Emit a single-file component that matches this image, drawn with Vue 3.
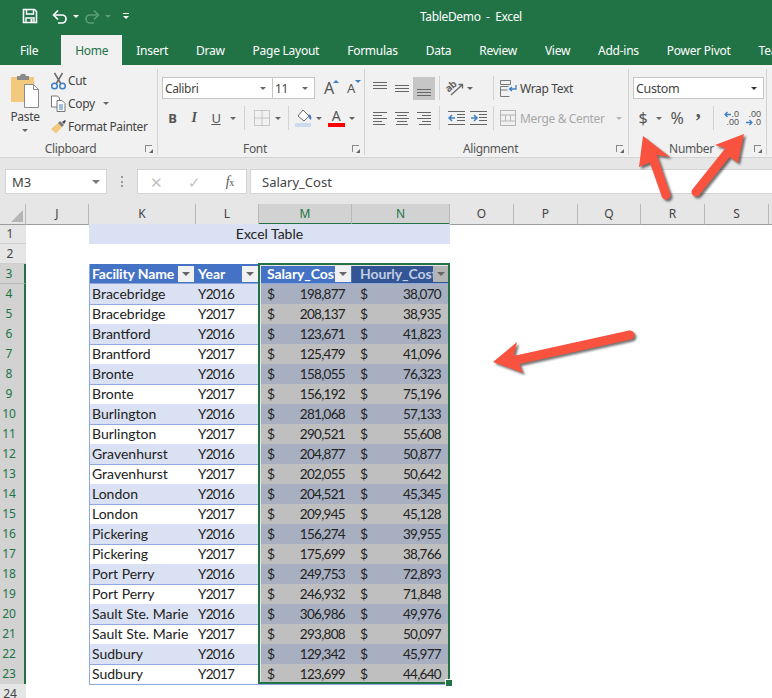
<template>
  <div class="excel">
    <header class="titlebar">
      <div class="qat">
        <svg class="qat-save" width="16" height="16" viewBox="0 0 16 16">
          <path d="M1.500 1.500h11l2 2v11h-13z" fill="none" stroke="#fff" stroke-width="1.600" />
          <path d="M4.500 2v4h7V2" fill="none" stroke="#fff" stroke-width="1.400" />
          <path d="M4 15v-5h8v5" fill="none" stroke="#fff" stroke-width="1.400" />
          <rect x="8.500" y="11" width="2" height="3" fill="#fff" />
        </svg>
        <svg class="qat-undo" width="16" height="15" viewBox="0 0 16 15">
          <path d="M2 6h8a4 4 0 0 1 0 8H6" fill="none" stroke="#fff" stroke-width="1.700" />
          <path d="M6 1.500 1.600 6 6 10.500" fill="none" stroke="#fff" stroke-width="1.700" />
        </svg>
        <span class="qat-caret"></span>
        <svg class="qat-redo" width="16" height="15" viewBox="0 0 16 15">
          <path d="M14 6H6a4 4 0 0 0 0 8h4" fill="none" stroke="#5d9c7b" stroke-width="1.600" />
          <path d="M10 1.500 14.400 6 10 10.500" fill="none" stroke="#5d9c7b" stroke-width="1.600" />
        </svg>
        <span class="qat-caret dim"></span>
        <span class="qat-more"></span>
      </div>
      <div class="doc-title">TableDemo&nbsp; -&nbsp; Excel</div>
    </header>

    <nav class="tabs">
      <div v-for="tab in tabs" :key="tab" class="tab" :class="{ active: tab === 'Home' }">{{ tab }}</div>
    </nav>

    <section class="ribbon">
      <div class="group g-clipboard">
        <div class="group-body clip-body">
          <div class="paste">
            <svg width="30" height="36" viewBox="0 0 30 36">
              <path d="M1 4h23v25H1z" fill="#f2c97d" />
              <path d="M7 3h3l1-2h4l1 2h3v4H7z" fill="#8a8a8a" />
              <path d="M14.500 11.500h9l5 5v18h-14z" fill="#fff" stroke="#8a8a8a" />
              <path d="M23.500 11.500v5h5" fill="none" stroke="#8a8a8a" />
            </svg>
            <span class="paste-label">Paste</span>
            <span class="caret"></span>
          </div>
          <div class="clip-list">
            <div class="clip-row">
              <svg width="16" height="18" viewBox="0 0 16 18">
                <path d="M4 1l6.500 11M12 1 5.500 12" stroke="#6a6a6a" stroke-width="1.500" fill="none" />
                <circle cx="4" cy="14" r="2.800" fill="none" stroke="#3f7fc4" stroke-width="1.500" />
                <circle cx="12" cy="14" r="2.800" fill="none" stroke="#3f7fc4" stroke-width="1.500" />
              </svg>
              <span>Cut</span>
            </div>
            <div class="clip-row">
              <svg width="16" height="17" viewBox="0 0 16 17">
                <path d="M1 1h6l2 2v9H1z" fill="#fff" stroke="#777" />
                <path d="M6.500 5.500h5l3 3v8h-8z" fill="#fff" stroke="#777" />
                <path d="M8.500 10h4M8.500 12h4M8.500 14h4" stroke="#3f7fc4" />
              </svg>
              <span>Copy</span>
              <span class="caret copy-caret"></span>
            </div>
            <div class="clip-row">
              <svg width="17" height="15" viewBox="0 0 17 15">
                <path d="M1 10l7-6 4 4-6 6.500z" fill="#f2c97d" />
                <path d="M8 4l4 4 2-2-4-4z" fill="#777" />
                <path d="M12 3l3-2 1 1-2 3z" fill="#444" />
              </svg>
              <span>Format Painter</span>
            </div>
          </div>
        </div>
        <div class="group-foot"><span class="group-label">Clipboard</span><span class="launcher"></span></div>
      </div>

      <div class="group g-font">
        <div class="group-body">
          <div class="tool-row">
            <div class="combo font-name">Calibri<span class="caret"></span></div>
            <div class="combo font-size">11<span class="caret"></span></div>
            <div class="tool w22 grow-a">A<i class="tick up"></i></div>
            <div class="tool w22 shrink-a">A<i class="tick down"></i></div>
          </div>
          <div class="tool-row">
            <div class="tool w21 fmt"><b>B</b></div>
            <div class="tool w22 fmt"><i class="serif-i">I</i></div>
            <div class="tool w22 fmt"><u>U</u></div>
            <div class="tool w12"><span class="caret"></span></div>
            <span class="sep"></span>
            <div class="tool w22">
              <svg width="18" height="18" viewBox="0 0 18 18">
                <path d="M1.500 1.500h15v15h-15zM9 1.500v15M1.500 9h15" fill="none" stroke="#a0a0a0" stroke-dasharray="1 1" />
              </svg>
            </div>
            <div class="tool w10"><span class="caret"></span></div>
            <span class="sep"></span>
            <div class="tool w18">
              <svg width="18" height="20" viewBox="0 0 18 20">
                <path d="M3 8l5-6 6 6-5 5z" fill="#fff" stroke="#666" />
                <path d="M14 6c2 1 3 3 2 6-2-1-3-3-2-6z" fill="#3f7fc4" />
                <rect x="0" y="15" width="16" height="4" fill="#cdd9ee" />
              </svg>
            </div>
            <div class="tool w12"><span class="caret"></span></div>
            <div class="tool w18 font-color"><span class="letter">A</span><span class="red-bar"></span></div>
            <div class="tool w14"><span class="caret"></span></div>
          </div>
        </div>
        <div class="group-foot"><span class="group-label">Font</span><span class="launcher"></span></div>
      </div>

      <div class="group g-align">
        <div class="group-body">
          <div class="tool-row">
            <div v-for="icon in valignIcons" :key="icon.id" class="tool w22" :class="{ pressed: icon.pressed }">
              <svg width="16" height="20" viewBox="0 0 16 20">
                <path :d="icon.d" stroke="#666" stroke-width="1.200" fill="none" />
              </svg>
            </div>
            <span class="sep"></span>
            <div class="tool w20">
              <svg width="20" height="20" viewBox="0 0 20 20">
                <text x="1" y="12" transform="rotate(-40 6 10)" font-size="10" font-weight="700" fill="#666">ab</text>
                <path d="M6 17 17 7M13.500 6.500H17.500V10.500" fill="none" stroke="#666" stroke-width="1.300" />
              </svg>
            </div>
            <div class="tool w10"><span class="caret"></span></div>
            <span class="sep wide"></span>
            <div class="wide-tool">
              <svg width="17" height="18" viewBox="0 0 17 18">
                <path d="M.5 1.500h10v4H.5zM.5 7.500h8M.5 11h7M.5 7.500v10h9" fill="none" stroke="#777" />
                <path d="M16 6v4h-6M12 8l-2.500 2 2.500 2" fill="none" stroke="#3f7fc4" stroke-width="1.300" />
              </svg>
              <span>Wrap Text</span>
            </div>
          </div>
          <div class="tool-row">
            <div v-for="icon in halignIcons" :key="icon.id" class="tool w22">
              <svg width="16" height="16" viewBox="0 0 16 16">
                <path :d="icon.d" stroke="#666" stroke-width="1.200" fill="none" />
              </svg>
            </div>
            <span class="sep"></span>
            <div class="tool w22">
              <svg width="17" height="14" viewBox="0 0 17 14">
                <path d="M1 7h6M4 4 1 7l3 3" stroke="#3f7fc4" stroke-width="1.500" fill="none" />
                <path d="M0 .5h17M9 3.500h8M9 6.500h8M9 9.500h8M0 13.500h17" stroke="#666" />
              </svg>
            </div>
            <div class="tool w22">
              <svg width="17" height="14" viewBox="0 0 17 14">
                <path d="M1 7h6M4 4l3 3-3 3" stroke="#3f7fc4" stroke-width="1.500" fill="none" />
                <path d="M0 .5h17M9 3.500h8M9 6.500h8M9 9.500h8M0 13.500h17" stroke="#666" />
              </svg>
            </div>
            <span class="sep wide-b"></span>
            <div class="wide-tool disabled">
              <svg width="17" height="16" viewBox="0 0 17 16">
                <path d="M.5.500h15v15H.500zM.5 5h15M.5 11h15M5.500 5v6M10.500 5v6" fill="none" stroke="#b5b5b5" />
              </svg>
              <span>Merge &amp; Center</span>
              <span class="caret merge-caret"></span>
            </div>
          </div>
        </div>
        <div class="group-foot"><span class="group-label">Alignment</span><span class="launcher"></span></div>
      </div>

      <div class="group g-number">
        <div class="group-body">
          <div class="tool-row">
            <div class="combo number-format">Custom<span class="caret dark"></span></div>
          </div>
          <div class="tool-row">
            <div class="tool w20 money">$</div>
            <div class="tool w12"><span class="caret"></span></div>
            <div class="tool w20 money pct">%</div>
            <div class="tool w20 comma">,</div>
            <span class="sep"></span>
            <div class="tool w20 decimals">
              <span class="dec-line">
                <svg width="7" height="7" viewBox="0 0 7 7"><path d="M7 3.500H1M3.500 1 1 3.500 3.500 6" fill="none" stroke="#3f7fc4" stroke-width="1.300" /></svg>
                <span>.0</span>
              </span>
              <span class="dec-line"><span>.00</span></span>
            </div>
            <div class="tool w20 decimals">
              <span class="dec-line"><span>.00</span></span>
              <span class="dec-line">
                <svg width="7" height="7" viewBox="0 0 7 7"><path d="M0 3.500h6M3.500 1 6 3.500 3.500 6" fill="none" stroke="#3f7fc4" stroke-width="1.300" /></svg>
                <span>.0</span>
              </span>
            </div>
          </div>
        </div>
        <div class="group-foot"><span class="group-label">Number</span><span class="launcher"></span></div>
      </div>
    </section>

    <div class="formula-bar">
      <div class="name-box">M3<span class="caret"></span></div>
      <span class="grip"></span>
      <div class="fx-box">
        <span class="fx-x">✕</span>
        <span class="fx-check">✓</span>
        <span class="fx-f"><i>f</i><small>x</small></span>
      </div>
      <div class="formula-input">Salary_Cost</div>
    </div>

    <div class="sheet">
      <div class="row head-row">
        <div class="corner"><span class="corner-tri"></span></div>
        <div
          v-for="col in columns"
          :key="col"
          class="col-head"
          :class="{ selected: col === 'M' || col === 'N' }"
        >
          {{ col }}
        </div>
      </div>

      <div class="row">
        <div class="row-head">1</div>
        <div></div>
        <div class="banner">Excel Table</div>
      </div>
      <div class="row">
        <div class="row-head">2</div>
      </div>
      <div class="row">
        <div class="row-head selected">3</div>
        <div></div>
        <div class="th th-k"><span class="th-text">Facility Name</span><span class="filter"></span></div>
        <div class="th th-l"><span class="th-text">Year</span><span class="filter"></span></div>
        <div class="th th-m"><span class="th-text">Salary_Cost</span><span class="filter"></span></div>
        <div class="th th-n"><span class="th-text">Hourly_Cost</span><span class="filter active"></span></div>
      </div>
      <div v-for="(item, i) in rows" :key="i" class="row data-row" :class="{ band: i % 2 === 0 }">
        <div class="row-head selected">{{ i + 4 }}</div>
        <div></div>
        <div class="td td-k">{{ item[0] }}</div>
        <div class="td td-l num">{{ item[1] }}</div>
        <div class="td money-cell td-m"><span>$</span><span class="num">{{ item[2] }}</span></div>
        <div class="td money-cell td-n"><span>$</span><span class="num">{{ item[3] }}</span></div>
      </div>
      <div class="row">
        <div class="row-head">24</div>
      </div>

      <div class="selection"><span class="handle"></span></div>
    </div>

    <svg class="arrows" width="772" height="698" viewBox="0 0 772 698">
      <g v-for="arrow in arrows" :key="arrow.id" class="arrow">
        <path :d="arrow.shaft" fill="none" stroke="#f9523f" stroke-width="9" stroke-linecap="round" />
        <path :d="arrow.head" fill="#f9523f" />
      </g>
    </svg>
  </div>
</template>

<script setup>
const tabs = ['File', 'Home', 'Insert', 'Draw', 'Page Layout', 'Formulas', 'Data', 'Review', 'View', 'Add-ins', 'Power Pivot', 'Team']

const columns = ['J', 'K', 'L', 'M', 'N', 'O', 'P', 'Q', 'R', 'S', 'T']

const valignIcons = [
  { id: 'top', d: 'M1 4.500h14M1 7.500h14M1 10.500h14' },
  { id: 'middle', d: 'M1 7.500h14M1 10.500h14M1 13.500h14' },
  { id: 'bottom', d: 'M1 11.500h14M1 14.500h14M1 17.500h14', pressed: true },
]

const halignIcons = [
  { id: 'left', d: 'M1 2.500h14M1 5.500h9M1 8.500h14M1 11.500h9M1 14.500h12' },
  { id: 'center', d: 'M1 2.500h14M3 5.500h10M1 8.500h14M3 11.500h10M2 14.500h12' },
  { id: 'right', d: 'M1 2.500h14M6 5.500h9M1 8.500h14M6 11.500h9M3 14.500h12' },
]

const rows = [
  ['Bracebridge', 'Y2016', '198,877', '38,070'],
  ['Bracebridge', 'Y2017', '208,137', '38,935'],
  ['Brantford', 'Y2016', '123,671', '41,823'],
  ['Brantford', 'Y2017', '125,479', '41,096'],
  ['Bronte', 'Y2016', '158,055', '76,323'],
  ['Bronte', 'Y2017', '156,192', '75,196'],
  ['Burlington', 'Y2016', '281,068', '57,133'],
  ['Burlington', 'Y2017', '290,521', '55,608'],
  ['Gravenhurst', 'Y2016', '204,877', '50,877'],
  ['Gravenhurst', 'Y2017', '202,055', '50,642'],
  ['London', 'Y2016', '204,521', '45,345'],
  ['London', 'Y2017', '209,945', '45,128'],
  ['Pickering', 'Y2016', '156,274', '39,955'],
  ['Pickering', 'Y2017', '175,699', '38,766'],
  ['Port Perry', 'Y2016', '249,753', '72,893'],
  ['Port Perry', 'Y2017', '246,932', '71,848'],
  ['Sault Ste. Marie', 'Y2016', '306,986', '49,976'],
  ['Sault Ste. Marie', 'Y2017', '293,808', '50,097'],
  ['Sudbury', 'Y2016', '129,342', '45,977'],
  ['Sudbury', 'Y2017', '123,699', '44,640'],
]

const arrows = [
  { id: 'dollar', shaft: 'M666 195 652 155', head: 'M643 136 670 157 656 155 657 160 639 167Z' },
  { id: 'decimal', shaft: 'M696 192 728 152', head: 'M744 134 715 145 727 149 724 153 738 163Z' },
  { id: 'table', shaft: 'M630 335 512 361', head: 'M493 362 517 342 514 355 517 358 523 373Z' },
]
</script>

<style scoped>
.excel {
  position: relative;
  width: 772px;
  height: 698px;
  overflow: hidden;
  background: #fff;
  font-family: "Noto Sans", "Open Sans", sans-serif;
  font-size: 12px;
  letter-spacing: -0.35px;
  color: #444;
}

.titlebar {
  display: flex;
  align-items: center;
  height: 35px;
  padding-bottom: 3px;
  box-sizing: border-box;
  background: #217346;
  color: #fff;
}

.qat {
  display: flex;
  align-items: center;
  width: 386px;
  padding-left: 22px;
  box-sizing: border-box;
}

.qat-undo {
  margin-left: 14px;
}

.qat-redo {
  margin-left: 5px;
}

.qat-caret {
  width: 0;
  height: 0;
  margin-left: 5px;
  border: 3px solid transparent;
  border-top-color: #fff;
  border-bottom: 0;
}

.qat-caret.dim {
  border-top-color: #5d9c7b;
}

.qat-more {
  width: 6px;
  height: 5px;
  margin-left: 12px;
  border-top: 1px solid #fff;
  position: relative;
}

.qat-more::after {
  content: "";
  position: absolute;
  left: 0;
  top: 2px;
  border: 3px solid transparent;
  border-top-color: #fff;
  border-bottom: 0;
}

.doc-title {
  margin-left: 34px;
}

.tabs {
  display: flex;
  height: 30px;
  padding-left: 6px;
  background: #217346;
  color: #fff;
  letter-spacing: -0.26px;
  white-space: nowrap;
}

.tab {
  padding: 0 14px;
  line-height: 31px;
}

.tab:first-child {
  margin-right: 9px;
}

.tab.active {
  background: #f1f1f1;
  color: #217346;
}

.ribbon {
  display: flex;
  height: 92px;
  background: #f1f1f1;
  border-bottom: 1px solid #d4d4d4;
  box-sizing: content-box;
}

.group {
  display: flex;
  flex-direction: column;
  box-sizing: border-box;
  height: 86px;
  margin-top: 4px;
  border-right: 1px solid #d2d2d2;
}

.g-clipboard { width: 158px; }
.g-font { width: 207px; padding-left: 4px; }
.g-align { width: 264px; padding-left: 4px; }
.g-number { width: 138px; padding-left: 4px; }

.group-body {
  flex: none;
  box-sizing: border-box;
  height: 73px;
  display: flex;
  flex-direction: column;
  gap: 8px;
  padding-top: 8px;
}

.group-foot {
  display: flex;
  align-items: center;
  height: 13px;
}

.group-label {
  flex: 1;
  text-align: center;
  line-height: 14px;
  color: #555;
}

.launcher {
  position: relative;
  width: 7px;
  height: 7px;
  margin: 0 5px 0 4px;
  border-left: 1px solid #888;
  border-top: 1px solid #888;
  box-sizing: border-box;
}

.launcher::after {
  content: "";
  position: absolute;
  right: -1px;
  bottom: -1px;
  border: 2.500px solid transparent;
  border-right-color: #666;
  border-bottom-color: #666;
}

.clip-body {
  flex-direction: row;
  gap: 0;
  padding-top: 0;
}

.paste {
  display: flex;
  flex-direction: column;
  align-items: center;
  width: 50px;
  padding-top: 4px;
  box-sizing: border-box;
}

.paste-label {
  line-height: 15px;
}

.paste .caret {
  margin-top: 5px;
}

.clip-list {
  display: flex;
  flex-direction: column;
}

.clip-row {
  display: flex;
  align-items: center;
  height: 23px;
}

.clip-row svg {
  flex: none;
  width: 17px;
  margin-right: 1px;
}

.copy-caret {
  margin-left: 8px;
}

.caret {
  display: inline-block;
  width: 0;
  height: 0;
  border: 3px solid transparent;
  border-top-color: #666;
  border-bottom: 0;
}

.caret.dark {
  border-top-color: #333;
}

.tool-row {
  display: flex;
  align-items: center;
  height: 22px;
}

.combo {
  display: flex;
  align-items: center;
  justify-content: space-between;
  box-sizing: border-box;
  height: 22px;
  padding: 0 6px 0 2px;
  background: #fff;
  border: 1px solid #c6c6c6;
}

.font-name { width: 111px; }
.font-size { width: 43px; margin-left: -1px; }
.number-format { width: 131px; color: #444; font-size: 12.500px; }

.tool {
  display: flex;
  align-items: center;
  justify-content: center;
  flex: none;
  height: 22px;
}

.w10 { width: 10px; }
.w12 { width: 12px; }
.w14 { width: 14px; }
.w18 { width: 18px; }
.w20 { width: 20px; }
.w21 { width: 21px; }
.w22 { width: 22px; }

.pressed {
  height: 23px;
  background: #c6c6c6;
}

.grow-a,
.shrink-a {
  position: relative;
  color: #555;
}

.grow-a { font-size: 16px; margin-left: 3px; }
.shrink-a { font-size: 13px; }

.tick {
  position: absolute;
  top: 3px;
  right: 1px;
  border: 3px solid transparent;
}

.tick.up {
  border-bottom-color: #3f7fc4;
  border-top: 0;
}

.tick.down {
  border-top-color: #3f7fc4;
  border-bottom: 0;
}

.fmt {
  font-size: 13px;
  color: #555;
}

.serif-i {
  font-family: "Liberation Serif", serif;
  font-size: 14px;
  font-weight: 700;
}

.sep {
  flex: none;
  width: 1px;
  height: 24px;
  margin: 0 6px 0 5px;
  background: #d2d2d2;
}

.sep.wide {
  margin: 0 6px 0 18px;
}

.sep.wide-b {
  margin: 0 6px 0 4px;
}

.g-align .sep:not(.wide):not(.wide-b) {
  margin: 0 5px 0 4px;
}

.font-color {
  flex-direction: column;
  margin-left: 2px;
}

.font-color .letter {
  font-size: 14px;
  line-height: 14px;
  color: #555;
}

.red-bar {
  width: 17px;
  height: 4px;
  background: #f00;
}

.wide-tool {
  display: flex;
  align-items: center;
  gap: 3px;
  white-space: nowrap;
}

.wide-tool.disabled {
  color: #a8a8a8;
}

.merge-caret {
  margin-left: 8px;
  border-top-color: #b5b5b5;
}

.money {
  font-size: 16px;
  color: #555;
}

.pct {
  margin-left: 2px;
}

.comma {
  align-items: flex-start;
  margin-left: 1px;
  font-family: "Liberation Serif", serif;
  font-size: 20px;
  font-weight: 700;
  line-height: 6px;
  color: #555;
}

.decimals {
  flex-direction: column;
  align-items: flex-end;
  margin-left: -1px;
  font-family: "Liberation Sans", sans-serif;
  font-size: 9px;
  letter-spacing: 0;
  color: #555;
}

.decimals + .decimals {
  margin-left: 2px;
}

.dec-line {
  display: flex;
  align-items: center;
  height: 8px;
  line-height: 8px;
}

.formula-bar {
  display: flex;
  align-items: flex-start;
  box-sizing: border-box;
  height: 46px;
  padding: 11px 0 0 5px;
  background: #e6e6e6;
}

.name-box,
.fx-box,
.formula-input {
  display: flex;
  align-items: center;
  box-sizing: border-box;
  height: 25px;
  background: #fff;
  border: 1px solid #d4d4d4;
}

.name-box {
  justify-content: space-between;
  width: 102px;
  padding: 0 6px;
  font-size: 13px;
  letter-spacing: 0;
}

.name-box .caret {
  border-width: 4px;
  border-top-color: #777;
  border-bottom: 0;
}

.grip {
  width: 2px;
  height: 11px;
  margin: 7px 14px 0;
  border-left: 2px dotted #999;
  box-sizing: border-box;
}

.fx-box {
  width: 110px;
  justify-content: space-between;
  padding: 0 12px;
}

.fx-x,
.fx-check {
  font-size: 15px;
  color: #c2c2c2;
}

.fx-f {
  font-family: "Liberation Serif", serif;
  color: #555;
  font-size: 14px;
}

.fx-f small {
  font-size: 10px;
}

.formula-input {
  flex: 1;
  margin-left: 3px;
  padding-left: 11px;
  font-size: 13px;
  letter-spacing: 0;
  border-right: 0;
}

.sheet {
  position: relative;
  font-family: Lato, "Liberation Sans", sans-serif;
  font-size: 14px;
  letter-spacing: 0;
  color: #222;
}

.row {
  display: grid;
  grid-template-columns: 26px 63px 107px 63px 93px 98px 64px 64px 63px 64px 64px 63px;
  height: 20px;
  line-height: 19px;
  white-space: nowrap;
}

.num {
  font-size: 13.500px;
  line-height: 20px;
  letter-spacing: -0.7px;
}

.head-row {
  font-family: "Noto Sans", "Open Sans", sans-serif;
  font-size: 12px;
  color: #444;
  background: #e6e6e6;
}

.corner {
  position: relative;
  background: #e6e6e6;
  border-right: 1px solid #b8b8b8;
  border-bottom: 1px solid #9c9c9c;
  box-sizing: border-box;
}

.corner-tri {
  position: absolute;
  right: 2px;
  bottom: 2px;
  border: 6px solid transparent;
  border-right-color: #b5b5b5;
  border-bottom-color: #b5b5b5;
}

.col-head {
  box-sizing: border-box;
  text-align: center;
  border-right: 1px solid #b8b8b8;
  border-bottom: 1px solid #9c9c9c;
}

.col-head.selected {
  background: #d2d2d2;
  color: #217346;
  border-bottom: 2px solid #217346;
}

.row-head {
  box-sizing: border-box;
  padding-right: 6px;
  text-align: center;
  font-family: "Noto Sans", "Open Sans", sans-serif;
  font-size: 12px;
  background: #e6e6e6;
  color: #444;
  border-bottom: 1px solid #cfcfcf;
}

.row-head.selected {
  background: #d2d2d2;
  color: #217346;
  border-right: 2px solid #217346;
  border-bottom-color: #b8b8b8;
}

.banner {
  grid-column: span 4;
  text-align: center;
  background: #d9e1f2;
}

.th,
.td {
  box-sizing: border-box;
  border-bottom: 1px solid #8ea9db;
}

.th {
  display: flex;
  align-items: center;
  font-weight: 700;
  color: #fff;
  background: #4472c4;
  overflow: hidden;
}

.th-text {
  flex: 1;
  min-width: 0;
  overflow: hidden;
}

.th-k { padding: 0 2px 0 2px; border-left: 1px solid #8ea9db; letter-spacing: -0.15px; }
.th-l { padding: 0 1px 0 2px; }
.th-m { padding: 0 1px 0 8px; letter-spacing: -0.1px; }
.th-n { padding: 0 2px 0 8px; letter-spacing: -0.1px; background: #335593; color: #c2cee4; }

.filter {
  position: relative;
  flex: none;
  width: 16px;
  height: 16px;
  background: #f1f1f1;
}

.filter::after {
  content: "";
  position: absolute;
  left: 4px;
  top: 6px;
  border: 4px solid transparent;
  border-top-color: #666;
  border-bottom: 0;
}

.filter.active {
  width: 15px;
  background: #b5b5b5;
}

.td-k { padding-left: 2px; border-left: 1px solid #8ea9db; }
.td-l { padding-left: 2px; }

.band .td-k,
.band .td-l {
  background: #d9e1f2;
}

.money-cell {
  display: flex;
  justify-content: space-between;
  background: #bfbfbf;
}

.band .money-cell {
  background: #a7afc0;
}

.td-m { padding: 0 7px 0 8px; }
.td-n { padding: 0 9px 0 8px; }

.selection {
  position: absolute;
  left: 258px;
  top: 59px;
  width: 192px;
  height: 421px;
  box-sizing: border-box;
  border: 2px solid #217346;
  box-shadow: inset 1px 1px 0 #e6e6e6;
}

.handle {
  position: absolute;
  right: -5px;
  bottom: -5px;
  width: 6px;
  height: 6px;
  background: #217346;
  border: 1px solid #fff;
}

.arrows {
  position: absolute;
  left: 0;
  top: 0;
}

.arrow {
  filter: drop-shadow(2px 2px 1px rgba(0, 0, 0, 0.55));
}
</style>

<style>
html,
body {
  margin: 0;
  background: #fff;
}
</style>
